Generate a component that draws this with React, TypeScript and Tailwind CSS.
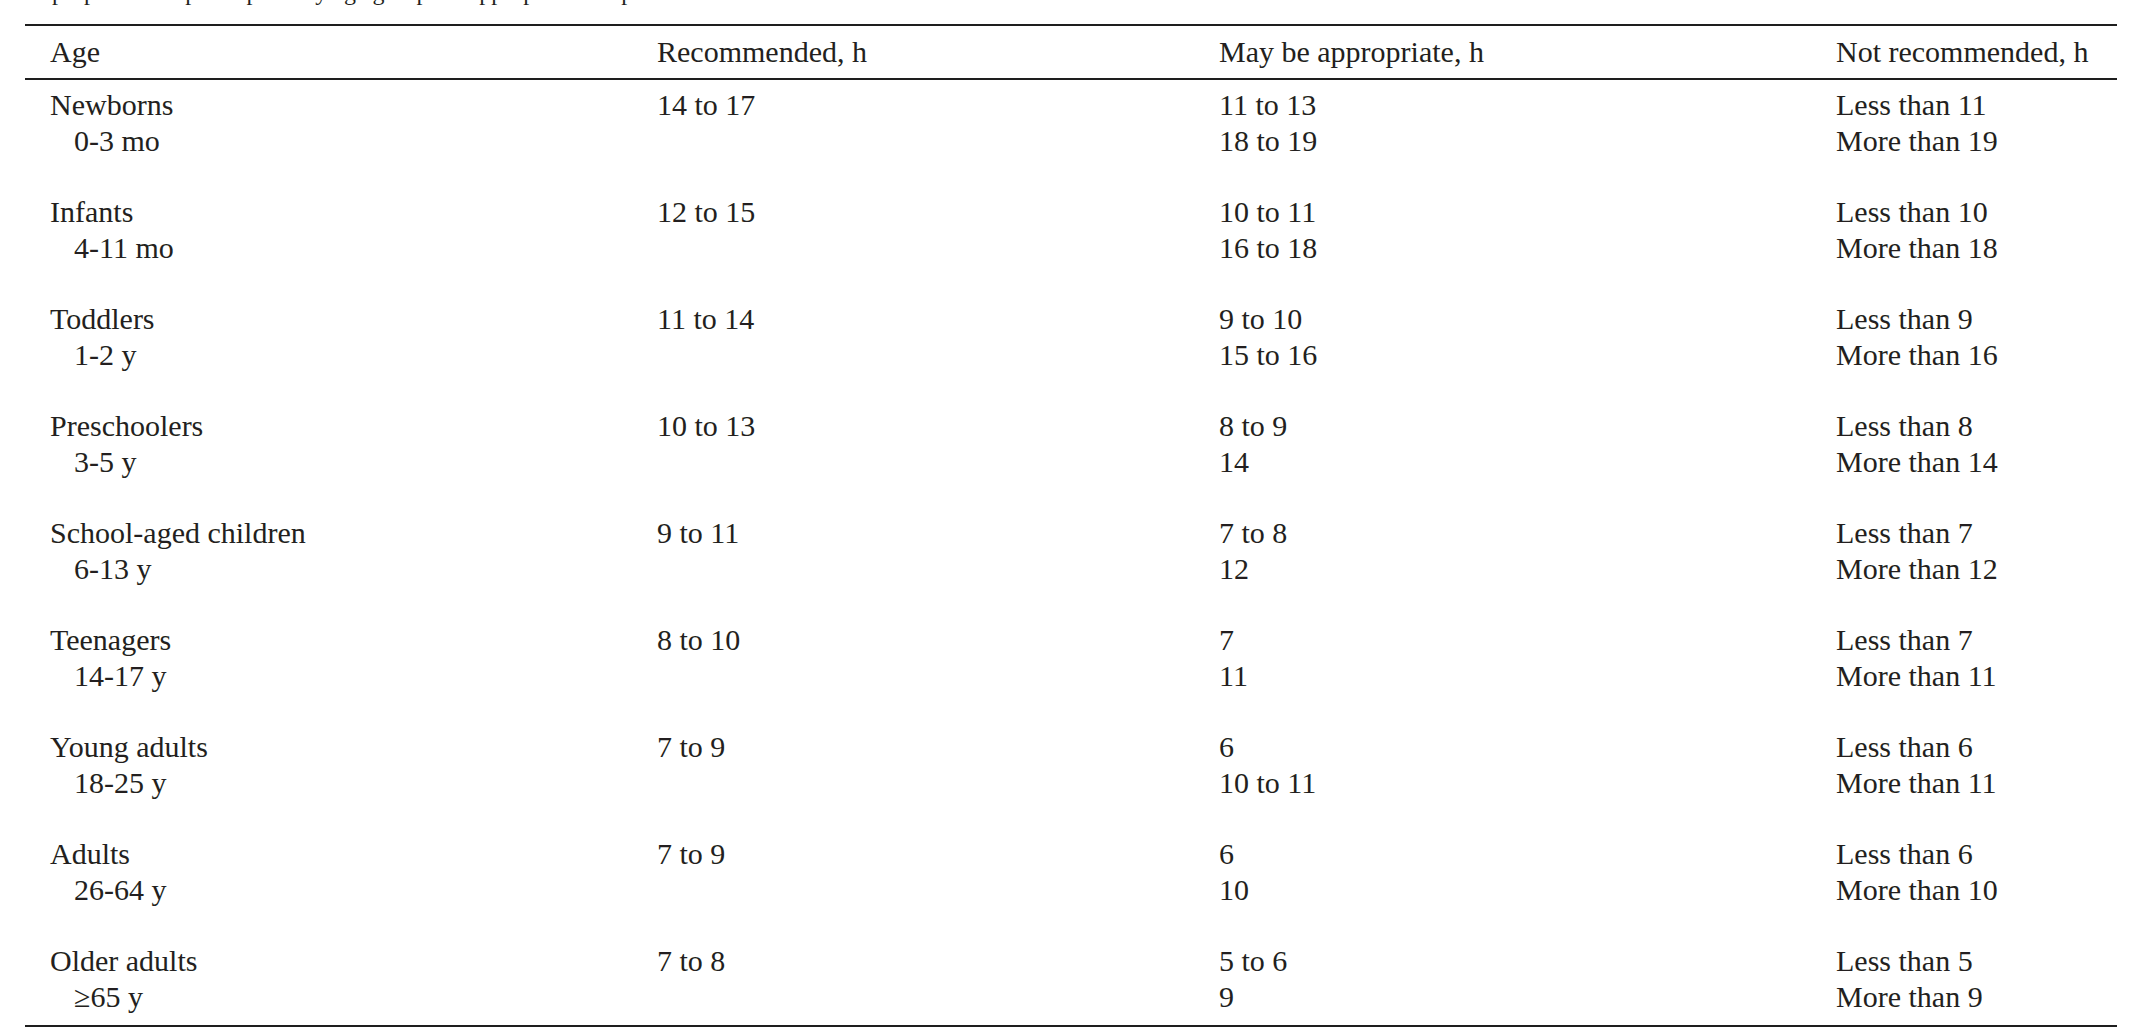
import React from "react";

type Row = { age: string; range: string; rec: string; may: [string, string]; not: [string, string] };

const rows: Row[] = [
  { age: "Newborns", range: "0-3 mo", rec: "14 to 17", may: ["11 to 13", "18 to 19"], not: ["Less than 11", "More than 19"] },
  { age: "Infants", range: "4-11 mo", rec: "12 to 15", may: ["10 to 11", "16 to 18"], not: ["Less than 10", "More than 18"] },
  { age: "Toddlers", range: "1-2 y", rec: "11 to 14", may: ["9 to 10", "15 to 16"], not: ["Less than 9", "More than 16"] },
  { age: "Preschoolers", range: "3-5 y", rec: "10 to 13", may: ["8 to 9", "14"], not: ["Less than 8", "More than 14"] },
  { age: "School-aged children", range: "6-13 y", rec: "9 to 11", may: ["7 to 8", "12"], not: ["Less than 7", "More than 12"] },
  { age: "Teenagers", range: "14-17 y", rec: "8 to 10", may: ["7", "11"], not: ["Less than 7", "More than 11"] },
  { age: "Young adults", range: "18-25 y", rec: "7 to 9", may: ["6", "10 to 11"], not: ["Less than 6", "More than 11"] },
  { age: "Adults", range: "26-64 y", rec: "7 to 9", may: ["6", "10"], not: ["Less than 6", "More than 10"] },
  { age: "Older adults", range: "\u226565 y", rec: "7 to 8", may: ["5 to 6", "9"], not: ["Less than 5", "More than 9"] },
];

const grid = "grid grid-cols-[607px_562px_617px_306px]";

export default function App() {
  return (
    <div className="h-[1029px] w-full overflow-hidden bg-white text-[#231f20] font-['Liberation_Serif',serif]">
      <div className="ml-[25px] w-[2092px]">
        <div className="-mt-[22px] h-[28px] mb-[18px] pl-[27px] text-[24px] leading-[28px] whitespace-nowrap">
          proportion of participants by age group for appropriate sleep durations
        </div>
        <div className="border-t-2 border-b-2 border-[#1e1e1e]">
          <div className={`${grid} pt-[8px] pb-[8px] text-[30px] leading-[36px]`}>
            <div className="pl-[25px]">Age</div>
            <div className="pl-[25px]">Recommended, h</div>
            <div className="pl-[25px]">May be appropriate, h</div>
            <div className="pl-[25px]">Not recommended, h</div>
          </div>
        </div>
        <div className="border-b-2 border-[#1e1e1e]">
          {rows.map((r, i) => (
            <div
              key={r.age}
              className={`${grid} pt-[7px] ${i === rows.length - 1 ? "pb-[10px]" : "pb-[28px]"} text-[30px] leading-[36px]`}
            >
              <div className="pl-[25px]">
                <div>{r.age}</div>
                <div className="pl-[24px]">{r.range}</div>
              </div>
              <div className="pl-[25px]">{r.rec}</div>
              <div className="pl-[25px]">
                <div>{r.may[0]}</div>
                <div>{r.may[1]}</div>
              </div>
              <div className="pl-[25px]">
                <div>{r.not[0]}</div>
                <div>{r.not[1]}</div>
              </div>
            </div>
          ))}
        </div>
      </div>
    </div>
  );
}
